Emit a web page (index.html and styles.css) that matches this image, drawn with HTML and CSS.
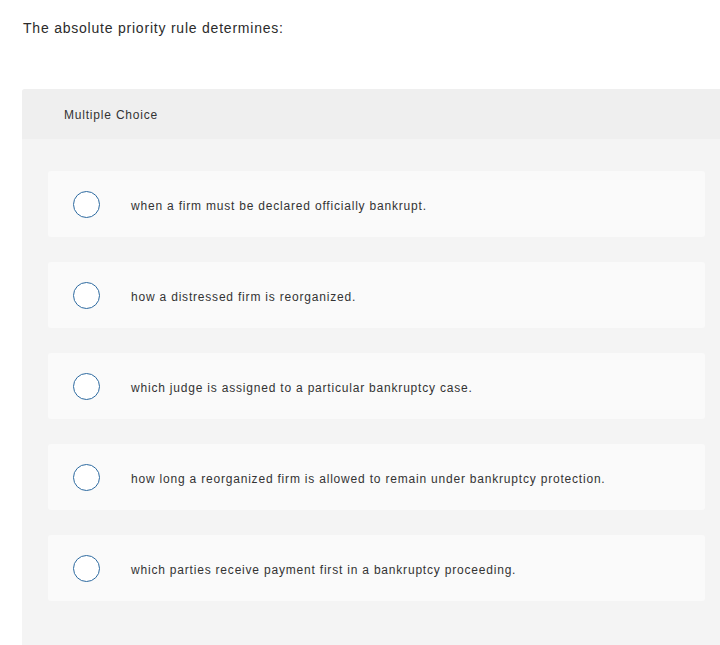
FILE: index.html
```html
<!DOCTYPE html>
<html>
<head>
<meta charset="utf-8">
<link rel="stylesheet" href="styles.css">
</head>
<body>
<p class="question">The absolute priority rule determines:</p>
<section class="panel">
  <div class="panel-header">Multiple Choice</div>
  <div class="options">
    <label class="option"><span class="radio"></span><span class="option-text">when a firm must be declared officially bankrupt.</span></label>
    <label class="option"><span class="radio"></span><span class="option-text">how a distressed firm is reorganized.</span></label>
    <label class="option"><span class="radio"></span><span class="option-text">which judge is assigned to a particular bankruptcy case.</span></label>
    <label class="option"><span class="radio"></span><span class="option-text">how long a reorganized firm is allowed to remain under bankruptcy protection.</span></label>
    <label class="option"><span class="radio"></span><span class="option-text">which parties receive payment first in a bankruptcy proceeding.</span></label>
  </div>
</section>
</body>
</html>
```
FILE: styles.css
```css
html, body {
  margin: 0;
  padding: 0;
  background: #ffffff;
  font-family: "Liberation Sans", Arial, sans-serif;
  color: #333333;
}
body {
  padding: 0 0 0 22px;
  overflow: hidden;
  height: 645px;
}
.question {
  margin: 0;
  padding: 19px 0 0 1px;
  font-size: 14px;
  line-height: 18px;
  height: 70px;
  box-sizing: border-box;
  letter-spacing: 0.78px;
  color: #2b2b2b;
}
.panel {
  margin-top: 19px;
  background: #f4f4f4;
  border-radius: 3px 0 0 0;
  min-height: 556px;
}
.panel-header {
  background: #efefef;
  height: 50px;
  display: flex;
  align-items: center;
  padding-left: 42px;
  padding-top: 1px;
  box-sizing: border-box;
  font-size: 12px;
  letter-spacing: 0.8px;
  border-radius: 3px 0 0 0;
}
.options {
  padding: 32px 15px 0 26px;
  display: flex;
  flex-direction: column;
  gap: 25px;
}
.option {
  background: #fafafa;
  border-radius: 3px;
  height: 66px;
  display: flex;
  align-items: center;
  padding-left: 25px;
}
.radio {
  width: 25px;
  height: 25px;
  border: 1.5px solid #2d6aa0;
  border-radius: 50%;
  background: #ffffff;
  flex: none;
}
.option-text {
  margin-left: 31px;
  padding-top: 3px;
  font-size: 12px;
  letter-spacing: 0.8px;
}
```
